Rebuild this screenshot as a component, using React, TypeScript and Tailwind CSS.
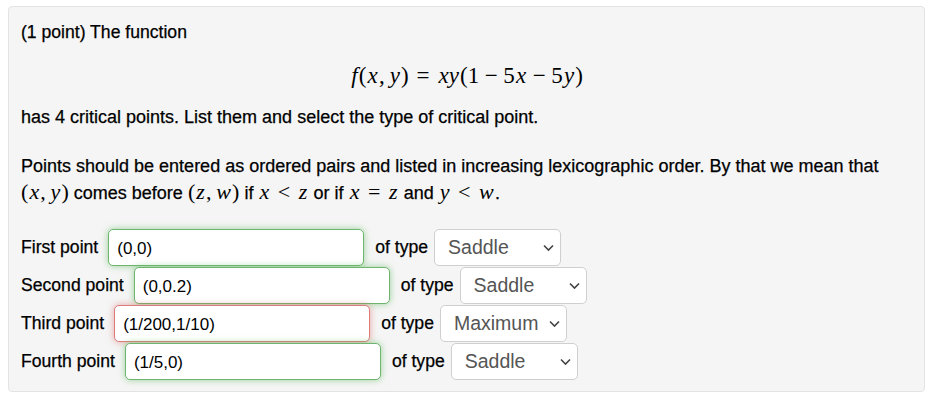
import React from 'react';

type Row = { label: string; value: string; type: string; ok: boolean };

const rows: Row[] = [
  { label: 'First point', value: '(0,0)', type: 'Saddle', ok: true },
  { label: 'Second point', value: '(0,0.2)', type: 'Saddle', ok: true },
  { label: 'Third point', value: '(1/200,1/10)', type: 'Maximum', ok: false },
  { label: 'Fourth point', value: '(1/5,0)', type: 'Saddle', ok: true },
];

// math pieces, roughly MathJax spacing
const V = ({ children }: { children: React.ReactNode }) => (
  <span className="italic px-[0.05em]">{children}</span>
);
const Rel = ({ children }: { children: React.ReactNode }) => (
  <span className="mx-[0.34em]">{children}</span>
);
const Bin = ({ children }: { children: React.ReactNode }) => (
  <span className="mx-[0.24em]">{children}</span>
);
const Math = ({ children, cls = 'text-[22px]' }: { children: React.ReactNode; cls?: string }) => (
  <span className={`font-['Liberation_Serif',serif] whitespace-nowrap [-webkit-text-stroke:0px] ${cls}`}>{children}</span>
);

const Chevron = () => (
  <svg width="11" height="7" viewBox="0 0 11 7" className="absolute right-[7px] top-1/2 -translate-y-1/2 pointer-events-none">
    <path d="M1 1l4.5 4.5L10 1" fill="none" stroke="#444" strokeWidth="1.6" />
  </svg>
);

function AnswerRow({ row }: { row: Row }) {
  const border = row.ok
    ? 'border-[#6fb56f] shadow-[0_0_7px_rgba(92,184,92,0.6)]'
    : 'border-[#dc7c7c] shadow-[0_0_7px_rgba(217,83,79,0.5)]';
  return (
    <div className="flex items-center h-[37px]">
      <span>{row.label}</span>
      <input
        readOnly
        value={row.value}
        className={`ml-[10px] w-[256px] h-[37px] bg-white border rounded-[5px] px-[8px] pt-[3px] text-[17px] text-black outline-none [-webkit-text-stroke:0px] ${border}`}
      />
      <span className="ml-[11px]">of type</span>
      <div className="relative ml-[6px]">
        <select
          value={row.type}
          onChange={() => {}}
          className="appearance-none w-[127px] h-[37px] bg-white border border-[#cfcfcf] rounded-[5px] pl-[13px] text-[19.5px] text-[#555] outline-none [-webkit-text-stroke:0px]"
        >
          <option>Saddle</option>
          <option>Maximum</option>
          <option>Minimum</option>
        </select>
        <Chevron />
      </div>
    </div>
  );
}

export default function App() {
  return (
    <div className="w-[946px] h-[410px] bg-white pt-[6px] pl-[8px] font-['Liberation_Sans',Arial,sans-serif] text-[17.6px] text-black [-webkit-text-stroke:0.25px_black]">
      <div className="w-[917px] h-[386px] bg-[#f5f5f5] border border-[#e3e3e3] rounded-[4px] pt-[13px] px-[12px] leading-[25px]">
        <p>(1 point) The function</p>
        <div className="mt-[10px] h-[40px] flex items-center justify-center">
          <Math cls="text-[23px]">
            <V>f</V>(<V>x</V>,<span className="ml-[0.17em]" /><V>y</V>)<Rel>=</Rel><V>xy</V>(1<Bin>−</Bin>5<V>x</V>
            <Bin>−</Bin>5<V>y</V>)
          </Math>
        </div>
        <p className="mt-[10px] text-[18px]">has 4 critical points. List them and select the type of critical point.</p>
        <p className="mt-[24px] text-[18px]">
          Points should be entered as ordered pairs and listed in increasing lexicographic order. By that we mean that{' '}
          <Math>
            (<V>x</V>,<span className="ml-[0.17em]" /><V>y</V>)
          </Math>{' '}
          comes before{' '}
          <Math>
            (<V>z</V>,<span className="ml-[0.17em]" /><V>w</V>)
          </Math>{' '}
          if{' '}
          <Math>
            <V>x</V>
            <Rel>&lt;</Rel>
            <V>z</V>
          </Math>{' '}
          or if{' '}
          <Math>
            <V>x</V>
            <Rel>=</Rel>
            <V>z</V>
          </Math>{' '}
          and{' '}
          <Math>
            <V>y</V>
            <Rel>&lt;</Rel>
            <V>w</V>
          </Math>
          .
        </p>
        <div className="mt-[23px] flex flex-col gap-[1px]">
          {rows.map((r) => (
            <AnswerRow key={r.label} row={r} />
          ))}
        </div>
      </div>
    </div>
  );
}
